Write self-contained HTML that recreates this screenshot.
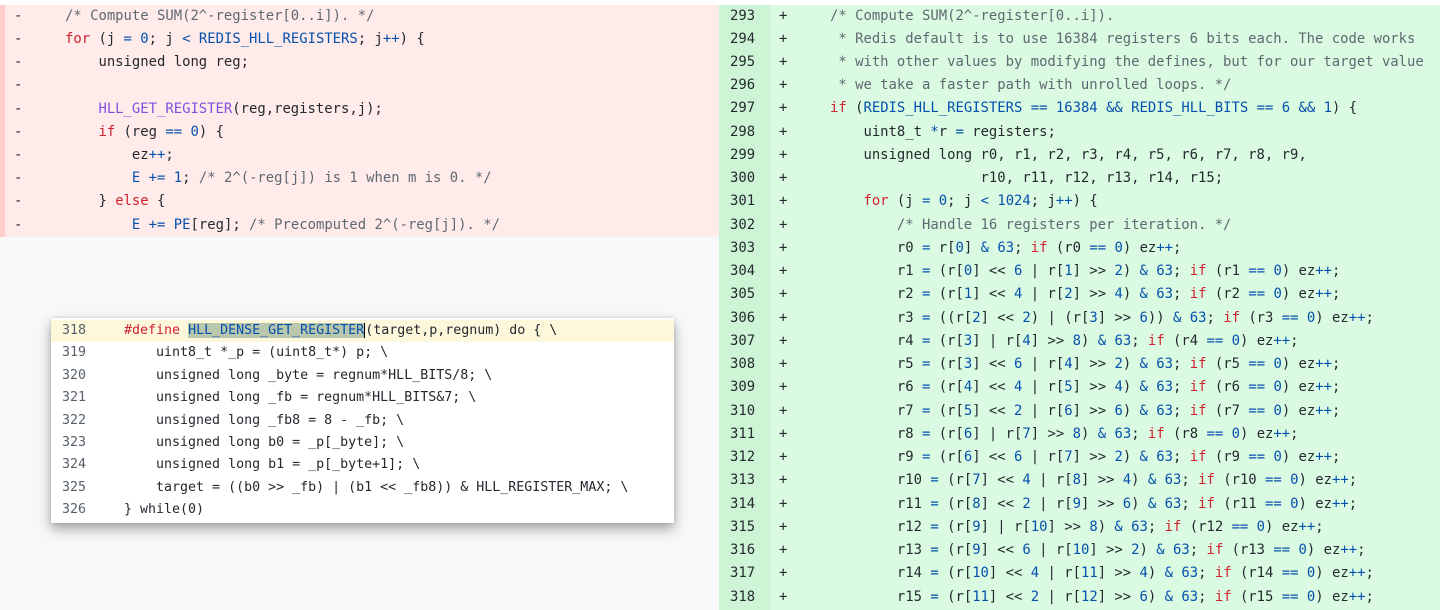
<!DOCTYPE html>
<html><head><meta charset="utf-8"><style>
*{margin:0;padding:0;box-sizing:border-box}
body{width:1440px;height:610px;overflow:hidden;background:#fff;position:relative;font-family:"DejaVu Sans Mono","Liberation Mono",monospace;color:#24292f}
i,u,s,em{font-style:normal;text-decoration:none}
i{color:#0550ae}u{color:#cf222e}s{color:#5f6872}em{color:#8250df}
#lbg{position:absolute;left:0;top:237px;width:719px;height:373px;background:#f6f8fa}
#left{position:absolute;left:0;top:5px;width:719px;height:232px;background:#ffebe9;border-left:5px solid #ffcecb}
#right{position:absolute;left:719px;top:5px;width:721px;height:605px;background:#dafbe1}
#rg{position:absolute;left:719px;top:5px;width:51px;height:605px;background:#cdf5d5}
.ln{position:absolute;height:23.24px;line-height:23.24px;font-size:13.9px;white-space:pre}
.m{position:absolute;left:14px}
.code{position:absolute}
#pop{position:absolute;left:51px;top:318px;width:623px;height:205px;background:#fff;box-shadow:0 6px 12px rgba(0,0,0,.35),0 0 3px rgba(0,0,0,.15)}
.pl{position:absolute;left:0;width:623px;height:22.4px;line-height:22.4px;font-size:13.3px;white-space:pre}
.pn{position:absolute;left:11px;color:#57606a}
.pc{position:absolute;left:73px}
.sel{background:#b9c7ad}
</style></head><body>
<div id="lbg"></div>
<div id="left"></div>
<div id="right"></div>
<div id="rg"></div>

<div class="ln" style="top:4.5px;left:0;width:719px"><span class="m">-</span><span class="code" style="left:65px"><s>/* Compute SUM(2^-register[0..i]). */</s></span></div>
<div class="ln" style="top:27.7px;left:0;width:719px"><span class="m">-</span><span class="code" style="left:65px"><u>for</u> (j <i>=</i> <i>0</i>; j <i>&lt;</i> <i>REDIS_HLL_REGISTERS</i>; j<i>++</i>) {</span></div>
<div class="ln" style="top:51px;left:0;width:719px"><span class="m">-</span><span class="code" style="left:65px">    unsigned long reg;</span></div>
<div class="ln" style="top:74.2px;left:0;width:719px"><span class="m">-</span></div>
<div class="ln" style="top:97.5px;left:0;width:719px"><span class="m">-</span><span class="code" style="left:65px">    <em>HLL_GET_REGISTER</em>(reg,registers,j);</span></div>
<div class="ln" style="top:120.7px;left:0;width:719px"><span class="m">-</span><span class="code" style="left:65px">    <u>if</u> (reg <i>==</i> <i>0</i>) {</span></div>
<div class="ln" style="top:143.9px;left:0;width:719px"><span class="m">-</span><span class="code" style="left:65px">        ez<i>++</i>;</span></div>
<div class="ln" style="top:167.2px;left:0;width:719px"><span class="m">-</span><span class="code" style="left:65px">        <i>E</i> <i>+=</i> <i>1</i>; <s>/* 2^(-reg[j]) is 1 when m is 0. */</s></span></div>
<div class="ln" style="top:190.4px;left:0;width:719px"><span class="m">-</span><span class="code" style="left:65px">    } <u>else</u> {</span></div>
<div class="ln" style="top:213.7px;left:0;width:719px"><span class="m">-</span><span class="code" style="left:65px">        <i>E</i> <i>+=</i> <i>PE</i>[reg]; <s>/* Precomputed 2^(-reg[j]). */</s></span></div>

<div id="R" style="position:absolute;left:719px;top:4.5px;width:721px">
<div class="ln" style="top:0px"><span class="code" style="left:11px">293</span><span class="code" style="left:60px">+</span><span class="code" style="left:111px"><s>/* Compute SUM(2^-register[0..i]).</s></span></div>
<div class="ln" style="top:23.24px"><span class="code" style="left:11px">294</span><span class="code" style="left:60px">+</span><span class="code" style="left:111px"><s> * Redis default is to use 16384 registers 6 bits each. The code works</s></span></div>
<div class="ln" style="top:46.48px"><span class="code" style="left:11px">295</span><span class="code" style="left:60px">+</span><span class="code" style="left:111px"><s> * with other values by modifying the defines, but for our target value</s></span></div>
<div class="ln" style="top:69.72px"><span class="code" style="left:11px">296</span><span class="code" style="left:60px">+</span><span class="code" style="left:111px"><s> * we take a faster path with unrolled loops. */</s></span></div>
<div class="ln" style="top:92.96px"><span class="code" style="left:11px">297</span><span class="code" style="left:60px">+</span><span class="code" style="left:111px"><u>if</u> (<i>REDIS_HLL_REGISTERS</i> <i>==</i> <i>16384</i> <i>&amp;&amp;</i> <i>REDIS_HLL_BITS</i> <i>==</i> <i>6</i> <i>&amp;&amp;</i> <i>1</i>) {</span></div>
<div class="ln" style="top:116.2px"><span class="code" style="left:11px">298</span><span class="code" style="left:60px">+</span><span class="code" style="left:111px">    uint8_t <i>*</i>r <i>=</i> registers;</span></div>
<div class="ln" style="top:139.44px"><span class="code" style="left:11px">299</span><span class="code" style="left:60px">+</span><span class="code" style="left:111px">    unsigned long r0, r1, r2, r3, r4, r5, r6, r7, r8, r9,</span></div>
<div class="ln" style="top:162.68px"><span class="code" style="left:11px">300</span><span class="code" style="left:60px">+</span><span class="code" style="left:111px">                  r10, r11, r12, r13, r14, r15;</span></div>
<div class="ln" style="top:185.92px"><span class="code" style="left:11px">301</span><span class="code" style="left:60px">+</span><span class="code" style="left:111px">    <u>for</u> (j <i>=</i> <i>0</i>; j <i>&lt;</i> <i>1024</i>; j<i>++</i>) {</span></div>
<div class="ln" style="top:209.16px"><span class="code" style="left:11px">302</span><span class="code" style="left:60px">+</span><span class="code" style="left:111px">        <s>/* Handle 16 registers per iteration. */</s></span></div>
<div class="ln" style="top:232.4px"><span class="code" style="left:11px">303</span><span class="code" style="left:60px">+</span><span class="code" style="left:111px">        r0 <i>=</i> r[<i>0</i>] <i>&amp;</i> <i>63</i>; <u>if</u> (r0 <i>==</i> <i>0</i>) ez<i>++</i>;</span></div>
<div class="ln" style="top:255.64px"><span class="code" style="left:11px">304</span><span class="code" style="left:60px">+</span><span class="code" style="left:111px">        r1 <i>=</i> (r[<i>0</i>] &lt;&lt; <i>6</i> | r[<i>1</i>] &gt;&gt; <i>2</i>) <i>&amp;</i> <i>63</i>; <u>if</u> (r1 <i>==</i> <i>0</i>) ez<i>++</i>;</span></div>
<div class="ln" style="top:278.88px"><span class="code" style="left:11px">305</span><span class="code" style="left:60px">+</span><span class="code" style="left:111px">        r2 <i>=</i> (r[<i>1</i>] &lt;&lt; <i>4</i> | r[<i>2</i>] &gt;&gt; <i>4</i>) <i>&amp;</i> <i>63</i>; <u>if</u> (r2 <i>==</i> <i>0</i>) ez<i>++</i>;</span></div>
<div class="ln" style="top:302.12px"><span class="code" style="left:11px">306</span><span class="code" style="left:60px">+</span><span class="code" style="left:111px">        r3 <i>=</i> ((r[<i>2</i>] &lt;&lt; <i>2</i>) | (r[<i>3</i>] &gt;&gt; <i>6</i>)) <i>&amp;</i> <i>63</i>; <u>if</u> (r3 <i>==</i> <i>0</i>) ez<i>++</i>;</span></div>
<div class="ln" style="top:325.36px"><span class="code" style="left:11px">307</span><span class="code" style="left:60px">+</span><span class="code" style="left:111px">        r4 <i>=</i> (r[<i>3</i>] | r[<i>4</i>] &gt;&gt; <i>8</i>) <i>&amp;</i> <i>63</i>; <u>if</u> (r4 <i>==</i> <i>0</i>) ez<i>++</i>;</span></div>
<div class="ln" style="top:348.6px"><span class="code" style="left:11px">308</span><span class="code" style="left:60px">+</span><span class="code" style="left:111px">        r5 <i>=</i> (r[<i>3</i>] &lt;&lt; <i>6</i> | r[<i>4</i>] &gt;&gt; <i>2</i>) <i>&amp;</i> <i>63</i>; <u>if</u> (r5 <i>==</i> <i>0</i>) ez<i>++</i>;</span></div>
<div class="ln" style="top:371.84px"><span class="code" style="left:11px">309</span><span class="code" style="left:60px">+</span><span class="code" style="left:111px">        r6 <i>=</i> (r[<i>4</i>] &lt;&lt; <i>4</i> | r[<i>5</i>] &gt;&gt; <i>4</i>) <i>&amp;</i> <i>63</i>; <u>if</u> (r6 <i>==</i> <i>0</i>) ez<i>++</i>;</span></div>
<div class="ln" style="top:395.08px"><span class="code" style="left:11px">310</span><span class="code" style="left:60px">+</span><span class="code" style="left:111px">        r7 <i>=</i> (r[<i>5</i>] &lt;&lt; <i>2</i> | r[<i>6</i>] &gt;&gt; <i>6</i>) <i>&amp;</i> <i>63</i>; <u>if</u> (r7 <i>==</i> <i>0</i>) ez<i>++</i>;</span></div>
<div class="ln" style="top:418.32px"><span class="code" style="left:11px">311</span><span class="code" style="left:60px">+</span><span class="code" style="left:111px">        r8 <i>=</i> (r[<i>6</i>] | r[<i>7</i>] &gt;&gt; <i>8</i>) <i>&amp;</i> <i>63</i>; <u>if</u> (r8 <i>==</i> <i>0</i>) ez<i>++</i>;</span></div>
<div class="ln" style="top:441.56px"><span class="code" style="left:11px">312</span><span class="code" style="left:60px">+</span><span class="code" style="left:111px">        r9 <i>=</i> (r[<i>6</i>] &lt;&lt; <i>6</i> | r[<i>7</i>] &gt;&gt; <i>2</i>) <i>&amp;</i> <i>63</i>; <u>if</u> (r9 <i>==</i> <i>0</i>) ez<i>++</i>;</span></div>
<div class="ln" style="top:464.8px"><span class="code" style="left:11px">313</span><span class="code" style="left:60px">+</span><span class="code" style="left:111px">        r10 <i>=</i> (r[<i>7</i>] &lt;&lt; <i>4</i> | r[<i>8</i>] &gt;&gt; <i>4</i>) <i>&amp;</i> <i>63</i>; <u>if</u> (r10 <i>==</i> <i>0</i>) ez<i>++</i>;</span></div>
<div class="ln" style="top:488.04px"><span class="code" style="left:11px">314</span><span class="code" style="left:60px">+</span><span class="code" style="left:111px">        r11 <i>=</i> (r[<i>8</i>] &lt;&lt; <i>2</i> | r[<i>9</i>] &gt;&gt; <i>6</i>) <i>&amp;</i> <i>63</i>; <u>if</u> (r11 <i>==</i> <i>0</i>) ez<i>++</i>;</span></div>
<div class="ln" style="top:511.28px"><span class="code" style="left:11px">315</span><span class="code" style="left:60px">+</span><span class="code" style="left:111px">        r12 <i>=</i> (r[<i>9</i>] | r[<i>10</i>] &gt;&gt; <i>8</i>) <i>&amp;</i> <i>63</i>; <u>if</u> (r12 <i>==</i> <i>0</i>) ez<i>++</i>;</span></div>
<div class="ln" style="top:534.52px"><span class="code" style="left:11px">316</span><span class="code" style="left:60px">+</span><span class="code" style="left:111px">        r13 <i>=</i> (r[<i>9</i>] &lt;&lt; <i>6</i> | r[<i>10</i>] &gt;&gt; <i>2</i>) <i>&amp;</i> <i>63</i>; <u>if</u> (r13 <i>==</i> <i>0</i>) ez<i>++</i>;</span></div>
<div class="ln" style="top:557.76px"><span class="code" style="left:11px">317</span><span class="code" style="left:60px">+</span><span class="code" style="left:111px">        r14 <i>=</i> (r[<i>10</i>] &lt;&lt; <i>4</i> | r[<i>11</i>] &gt;&gt; <i>4</i>) <i>&amp;</i> <i>63</i>; <u>if</u> (r14 <i>==</i> <i>0</i>) ez<i>++</i>;</span></div>
<div class="ln" style="top:581px"><span class="code" style="left:11px">318</span><span class="code" style="left:60px">+</span><span class="code" style="left:111px">        r15 <i>=</i> (r[<i>11</i>] &lt;&lt; <i>2</i> | r[<i>12</i>] &gt;&gt; <i>6</i>) <i>&amp;</i> <i>63</i>; <u>if</u> (r15 <i>==</i> <i>0</i>) ez<i>++</i>;</span></div>
</div>

<div id="pop">
<div class="pl" style="top:2px;background:#fdf8dc"><span class="pn">318</span><span class="pc"><u>#define</u> <span class="sel" style="color:#0550ae">HLL_DENSE_GET_REGISTER</span><span style="border-left:1.5px solid #000"></span>(target,p,regnum) do { \</span></div>
<div class="pl" style="top:24.4px"><span class="pn">319</span><span class="pc">    uint8_t *_p = (uint8_t*) p; \</span></div>
<div class="pl" style="top:46.8px"><span class="pn">320</span><span class="pc">    unsigned long _byte = regnum*HLL_BITS/8; \</span></div>
<div class="pl" style="top:69.2px"><span class="pn">321</span><span class="pc">    unsigned long _fb = regnum*HLL_BITS&amp;7; \</span></div>
<div class="pl" style="top:91.6px"><span class="pn">322</span><span class="pc">    unsigned long _fb8 = 8 - _fb; \</span></div>
<div class="pl" style="top:114px"><span class="pn">323</span><span class="pc">    unsigned long b0 = _p[_byte]; \</span></div>
<div class="pl" style="top:136.4px"><span class="pn">324</span><span class="pc">    unsigned long b1 = _p[_byte+1]; \</span></div>
<div class="pl" style="top:158.8px"><span class="pn">325</span><span class="pc">    target = ((b0 &gt;&gt; _fb) | (b1 &lt;&lt; _fb8)) &amp; HLL_REGISTER_MAX; \</span></div>
<div class="pl" style="top:181.2px"><span class="pn">326</span><span class="pc">} while(0)</span></div>
</div>
</body></html>
